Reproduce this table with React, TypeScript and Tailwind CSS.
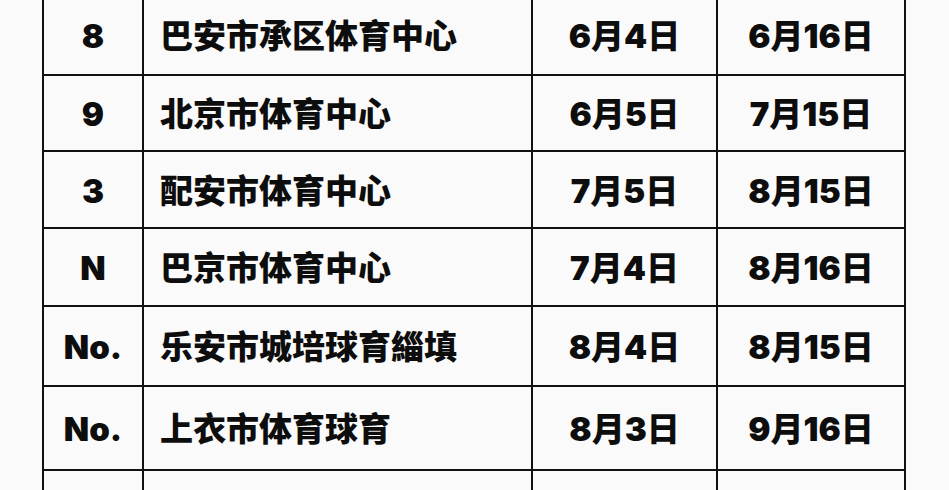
import React from "react";

type Row = { no: string; name: string; start: string; end: string; h: string };

const rows: Row[] = [
  { no: "8", name: "巴安市承区体育中心", start: "6月4日", end: "6月16日", h: "h-[80px]" },
  { no: "9", name: "北京市体育中心", start: "6月5日", end: "7月15日", h: "h-[76px]" },
  { no: "3", name: "配安市体育中心", start: "7月5日", end: "8月15日", h: "h-[77px]" },
  { no: "N", name: "巴京市体育中心", start: "7月4日", end: "8月16日", h: "h-[78px]" },
  { no: "No.", name: "乐安市城培球育緇填", start: "8月4日", end: "8月15日", h: "h-[80px]" },
  { no: "No.", name: "上衣市体育球育", start: "8月3日", end: "9月16日", h: "h-[84px]" },
  { no: "", name: "", start: "", end: "", h: "h-[84px]" },
];

export default function App() {
  return (
    <div
      className="w-[949px] h-[490px] overflow-hidden bg-[#fafafa] text-[#0d0d0d]"
      style={{ fontFamily: '"Inter", "Noto Sans CJK SC", sans-serif' }}
    >
      <div className="-mt-[4px] ml-[42px] w-[864px] flex flex-col">
        {rows.map((r, i) => (
          <div
            key={i}
            className={`flex ${r.h} border-b-2 border-[#111111] text-[33px] font-black leading-none`}
          >
            <div className="w-[100px] border-l-2 border-[#111111] flex items-center justify-center pt-[3px]">
              {r.no}
            </div>
            <div className="w-[389px] border-l-2 border-[#111111] flex items-center pl-[16px] pt-[3px]">
              {r.name}
            </div>
            <div className="w-[185px] border-l-2 border-[#111111] flex items-center justify-center pt-[3px]">
              {r.start}
            </div>
            <div className="w-[190px] border-l-2 border-r-2 border-[#111111] flex items-center justify-center pt-[3px]">
              {r.end}
            </div>
          </div>
        ))}
      </div>
    </div>
  );
}
